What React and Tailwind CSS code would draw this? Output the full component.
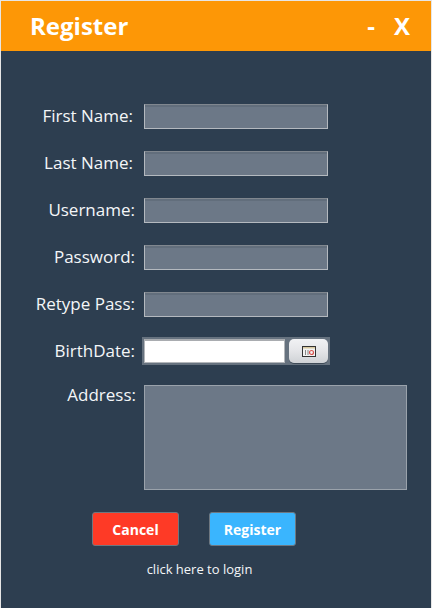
function Field({ label, pr = "pr-[9px]" }) {
  return (
    <div className="flex h-[25px] items-center">
      <div className={`w-[143px] whitespace-nowrap pb-[2px] text-right text-[17px] leading-[23px] text-[#f4f6f8] ${pr}`}>{label}</div>
      <div className="h-[25px] w-[184px] border border-[#b4b9bf] border-t-[#80878f] bg-[#6c7887] shadow-[inset_0_2px_0_#626e7c]" />
    </div>
  );
}

export default function App() {
  return (
    <div className="h-[608px] w-[432px] overflow-hidden bg-[#e6e6e6] pl-px pt-px pr-px font-['Open_Sans','Noto_Sans',sans-serif]">
      <div className="flex h-[607px] flex-col bg-[#2d3e50]">
        <header className="flex h-[50px] items-center justify-between bg-[#fd9706] pl-[29px] pr-[21px] text-white">
          <span className="text-[24px] font-bold leading-none">Register</span>
          <div className="flex items-center gap-[19px] text-[24px] font-bold leading-none">
            <span>-</span>
            <span>X</span>
          </div>
        </header>
        <main className="flex flex-col pt-[53px]">
          <div className="flex flex-col gap-[22px]">
            <Field label="First Name:" pr="pr-[11px]" />
            <Field label="Last Name:" pr="pr-[11px]" />
            <Field label="Username:" />
            <Field label="Password:" />
            <Field label="Retype Pass:" />
          </div>
          <div className="mt-[20px] flex h-[28px] items-center">
            <div className="w-[141px] pr-[7px] text-right text-[17px] text-[#f4f6f8]">BirthDate:</div>
            <div className="flex h-[28px] w-[188px] items-center gap-[4px] bg-[#66727f] pl-[2px] pr-[2px]">
              <div className="h-[24px] w-[141px] border border-[#b3b6ba] border-t-2 border-t-[#a9acb0] bg-white" />
              <div className="flex h-[24px] w-[39px] items-center justify-center rounded-[5px] bg-gradient-to-b from-[#f1f2f4] via-[#e4e5e8] to-[#cfd2d6] shadow-[0_1px_0_#3e4a57]">
                <svg width="14" height="11" viewBox="0 0 14 11">
                  <rect x="0.5" y="0.5" width="13" height="10" fill="#f2f2f2" stroke="#333" />
                  <rect x="1" y="1" width="12" height="1.5" fill="#d8c9a0" />
                  <path d="M3.5 4v5M6 4v5" stroke="#888" />
                  <circle cx="9.5" cy="6.5" r="2" fill="none" stroke="#d9534f" strokeWidth="1.2" />
                </svg>
              </div>
            </div>
          </div>
          <div className="mt-[20px] flex">
            <div className="w-[143px] pr-[8px] text-right text-[17px] leading-[20px] text-[#f4f6f8]">Address:</div>
            <div className="h-[105px] w-[263px] border border-[#9aa2ab] bg-[#6c7887]" />
          </div>
          <div className="mt-[22px] flex gap-[30px] pl-[91px]">
            <button className="h-[34px] w-[87px] rounded-[3px] border border-[#6e7780] bg-[#fe3a26] text-[14px] font-bold text-white">Cancel</button>
            <button className="h-[34px] w-[87px] rounded-[3px] border border-[#6e7780] bg-[#3ab5fe] text-[14px] font-bold text-white">Register</button>
          </div>
          <div className="mt-[13px] w-[397px] text-center text-[13px] leading-[20px] text-[#f4f6f8]">click here to login</div>
        </main>
      </div>
    </div>
  );
}
